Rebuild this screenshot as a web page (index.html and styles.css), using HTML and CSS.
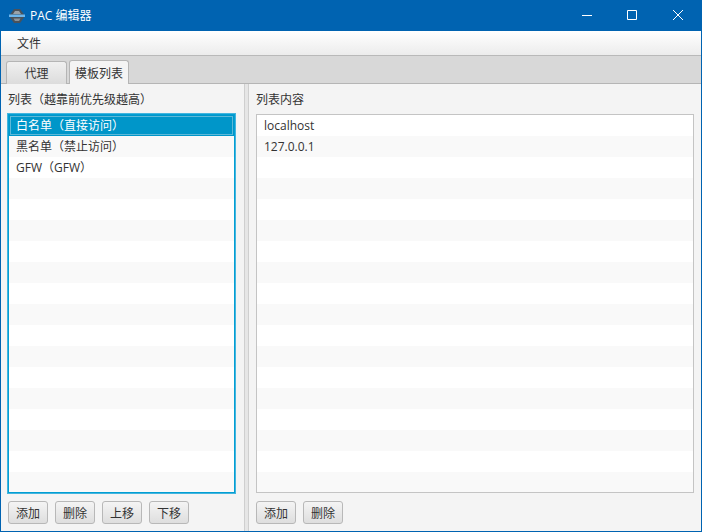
FILE: index.html
```html
<!DOCTYPE html>
<html lang="zh-CN">
<head>
  <meta charset="UTF-8" />
  <title>PAC 编辑器</title>
  <link rel="stylesheet" href="styles.css">
</head>
<body>
  <div class="window">
    <div class="titlebar">
      <svg class="app-icon" width="18" height="16" viewBox="0 0 18 16">
        <path d="M6 1h6l5 7-5 7H6L1 8z" fill="#4a525b"/>
        <path d="M7 3h4l2 3H5z" fill="#9aa2a9"/>
        <path d="M1 6.5h16v2.5H1z" fill="#6cb6ee"/>
        <path d="M5.5 10.5h7L11 13H7z" fill="#8a9299"/>
      </svg>
      <span class="title">PAC 编辑器</span>
      <div class="win-buttons">
        <svg width="46" height="31" viewBox="0 0 46 31"><path d="M19 15.5h10" stroke="#fff" fill="none"/></svg>
        <svg width="46" height="31" viewBox="0 0 46 31"><path d="M18.5 10.5h9v9h-9z" stroke="#fff" fill="none"/></svg>
        <svg width="46" height="31" viewBox="0 0 46 31"><path d="M18 10l10 10M28 10L18 20" stroke="#fff" fill="none"/></svg>
      </div>
    </div>
    <div class="menubar"><span class="menu-item">文件</span></div>
    <div class="tabbar">
      <div class="tab">代理</div>
      <div class="tab active">模板列表</div>
    </div>
    <div class="content">
      <div class="pane left">
        <div class="pane-label">列表（越靠前优先级越高）</div>
        <div class="list focused" id="leftList"></div>
        <div class="actions">
          <button>添加</button>
          <button>删除</button>
          <button>上移</button>
          <button>下移</button>
        </div>
      </div>
      <div class="divider"></div>
      <div class="pane right">
        <div class="pane-label">列表内容</div>
        <div class="list" id="rightList"></div>
        <div class="actions">
          <button>添加</button>
          <button>删除</button>
        </div>
      </div>
    </div>
  </div>

  <script>
    function fillList(el, items, selected) {
      for (let i = 0; i < 18; i++) {
        const row = document.createElement('div');
        row.className = 'row';
        if (i % 2 === 1) row.classList.add('odd');
        if (i === selected) row.classList.add('selected');
        row.textContent = items[i] || '';
        el.appendChild(row);
      }
    }
    fillList(document.getElementById('leftList'), ['白名单（直接访问）', '黑名单（禁止访问）', 'GFW（GFW）'], 0);
    fillList(document.getElementById('rightList'), ['localhost', '127.0.0.1'], -1);
  </script>
</body>
</html>
```

FILE: styles.css
```css
* {
  box-sizing: border-box;
}
html, body {
  margin: 0;
  height: 100%;
}
body {
  font-family: "Open Sans", "Noto Sans CJK SC", sans-serif;
  font-size: 12px;
  color: #333;
  overflow: hidden;
}
.window {
  display: flex;
  flex-direction: column;
  width: 702px;
  height: 532px;
  border: 1px solid #0063b1;
  border-top: none;
  background: #f4f4f4;
}
.titlebar {
  display: flex;
  align-items: center;
  flex: none;
  height: 31px;
  margin: 0 -1px;
  padding-left: 8px;
  background: #0063b1;
  color: #fff;
}
.app-icon {
  flex: none;
}
.title {
  margin-left: 4px;
  margin-bottom: 2px;
  font-size: 12px;
}
.win-buttons {
  display: flex;
  margin-left: auto;
  margin-right: 1px;
}
.win-buttons svg {
  display: block;
}
.menubar {
  flex: none;
  height: 25px;
  padding: 4px 16px;
  line-height: 17px;
  background: linear-gradient(#fff, #ececec);
  border-bottom: 1px solid #b9b9b9;
}
.tabbar {
  display: flex;
  align-items: flex-end;
  gap: 2px;
  flex: none;
  height: 28px;
  padding-left: 5px;
  background: #d8d8d8;
  border-bottom: 1px solid #b5b5b5;
}
.tab {
  width: 61px;
  height: 23px;
  margin-bottom: -1px;
  line-height: 24px;
  text-align: center;
  border: 1px solid #b5b5b5;
  border-bottom: none;
  border-radius: 3px 3px 0 0;
  background: linear-gradient(#f0f0f0, #dcdcdc);
}
.tab.active {
  width: 60px;
  height: 24px;
  line-height: 26px;
  background: #f4f4f4;
  position: relative;
}
.content {
  display: flex;
  flex: 1;
  min-height: 0;
}
.pane {
  display: flex;
  flex-direction: column;
  min-width: 0;
}
.pane.left {
  width: 243px;
  padding: 7px 9px 7px 7px;
}
.pane.right {
  flex: 1;
  padding: 7px;
}
.divider {
  flex: none;
  width: 5px;
  background: #e6e6e6;
  border-left: 1px solid #cfcfcf;
  border-right: 1px solid #cfcfcf;
}
.pane-label {
  height: 23px;
  line-height: 17px;
}
.list {
  flex: none;
  height: 379px;
  overflow: hidden;
  background: #fff;
  border: 1px solid #c4c4c4;
}
.list.focused {
  border: 1px solid #039ed3;
  box-shadow: 0 0 0 1px #43b5de;
}
.row {
  height: 21px;
  padding-left: 7px;
  line-height: 21px;
  white-space: nowrap;
  background: #fff;
}
.row.odd {
  background: #f9f9f9;
}
.row.selected {
  background: #0096c9;
  color: #fff;
  outline: 1px solid #5db9d9;
  outline-offset: -2px;
}
.actions {
  display: flex;
  gap: 7px;
  margin-top: 8px;
}
.actions button {
  flex: none;
  width: 40px;
  height: 23px;
  padding: 0;
  font: inherit;
  color: #333;
  background: linear-gradient(#f4f4f4, #dedede);
  border: 1px solid #b8b8b8;
  border-radius: 3px;
}
```
